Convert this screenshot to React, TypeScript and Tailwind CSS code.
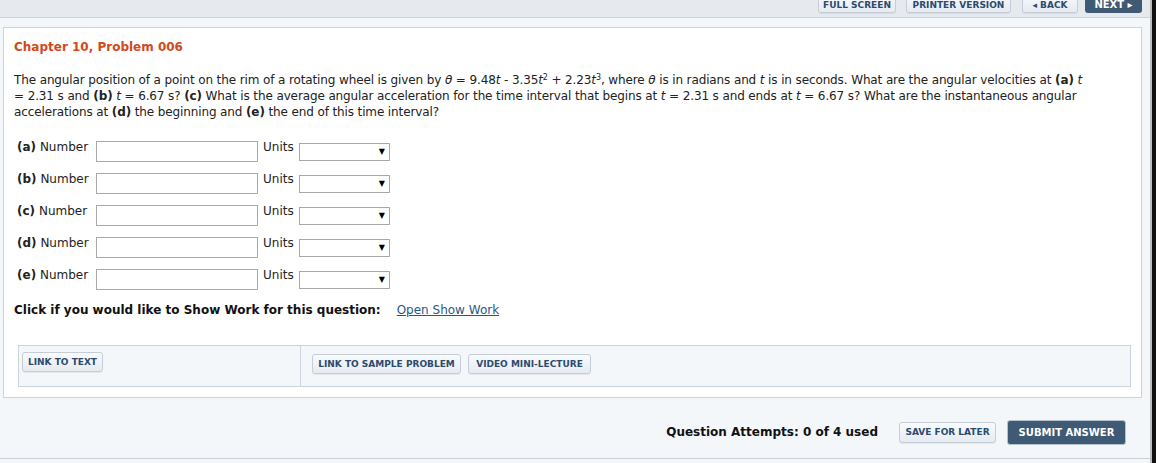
import React from "react";

const btn =
  "flex items-center justify-center whitespace-nowrap rounded-[3px] border border-[#c5cdd8] bg-gradient-to-b from-[#f9fbfd] to-[#e6ebf1] text-[9px] font-bold text-[#2c4a6e] uppercase leading-none shadow-[0_1px_0_rgba(0,0,0,0.06)]";

function Row({ l }: { l: string }) {
  return (
    <div className="flex items-start h-[32px] pl-[3px]">
      <div className="w-[79px] leading-[16px] whitespace-nowrap">
        <b>({l})</b> Number
      </div>
      <div className="mt-[2px] w-[162px] h-[21px] border border-[#a9a9a9] bg-white" />
      <div className="ml-[5px] w-[36px] leading-[16px]">Units</div>
      <div className="mt-[4px] w-[91px] h-[18px] border border-[#a9a9a9] bg-white flex items-center justify-end pr-[4px] text-[8px] text-black">
        ▼
      </div>
    </div>
  );
}

export default function App() {
  return (
    <div
      className="w-[1156px] h-[463px] flex bg-[#f4f7fa] overflow-hidden text-[12px] text-[#222]"
      style={{ fontFamily: '"DejaVu Sans", Verdana, sans-serif' }}
    >
      <div className="w-[1150px] flex flex-col">
        <div className="h-[18px] bg-[#e6eaee] border-b border-[#c9d1da] flex justify-end items-end pr-[8px]">
          <div className="flex items-end mb-[4px]">
            <div className={btn + " w-[78px] h-[22px] pt-[6px]"}>Full Screen</div>
            <div className={btn + " ml-[10px] w-[105px] h-[22px] pt-[6px]"}>Printer Version</div>
            <div className={btn + " ml-[11px] w-[56px] h-[22px] pt-[6px]"}>◂ Back</div>
            <div className="ml-[7px] w-[57px] h-[22px] pt-[6px] flex items-center justify-center rounded-[3px] bg-[#3e5a75] text-white text-[10px] font-bold leading-none">
              NEXT ▸
            </div>
          </div>
        </div>
        <div className="pl-[3px] pr-[8px] pt-[9px]">
          <div className="bg-white border border-[#cdd4de] px-[10px] pt-[11px] pb-[10px]">
            <div className="font-bold text-[#d2491b] leading-[16px] text-[12px]">Chapter 10, Problem 006</div>
            <div className="mt-[17px] leading-[16px] whitespace-nowrap tracking-[-0.12px]">
              The angular position of a point on the rim of a rotating wheel is given by <i>θ</i> = 9.48<i>t</i> - 3.35<i>t</i>
              <sup className="text-[8px]">2</sup> + 2.23<i>t</i>
              <sup className="text-[8px]">3</sup>, where <i>θ</i> is in radians and <i>t</i> is in seconds. What are the angular velocities at <b>(a)</b> <i>t</i>
              <br />= 2.31 s and <b>(b)</b> <i>t</i> = 6.67 s? <b>(c)</b> What is the average angular acceleration for the time interval that begins at <i>t</i> = 2.31 s and ends at <i>t</i> = 6.67 s? What are the instantaneous angular
              <br />
              accelerations at <b>(d)</b> the beginning and <b>(e)</b> the end of this time interval?
            </div>
            <div className="mt-[19px]">
              <Row l="a" />
              <Row l="b" />
              <Row l="c" />
              <Row l="d" />
              <Row l="e" />
            </div>
            <div className="mt-[3px] leading-[16px] flex">
              <span className="font-bold text-[#111]">Click if you would like to Show Work for this question:</span>
              <span className="ml-[16px] underline text-[#2a5886]">Open Show Work</span>
            </div>
            <div className="mt-[27px] ml-[4px] w-[1113px] h-[42px] border border-[#cdd4de] bg-[#f4f7fa] flex">
              <div className="w-[282px] border-r border-[#cdd4de] pl-[3px] pt-[6px]">
                <div className={btn + " w-[81px] h-[20px]"}>Link to Text</div>
              </div>
              <div className="flex-1 pl-[11px] pt-[8px] flex items-start">
                <div className={btn + " w-[149px] h-[20px]"}>Link to Sample Problem</div>
                <div className={btn + " ml-[7px] w-[123px] h-[20px]"}>Video Mini-Lecture</div>
              </div>
            </div>
          </div>
        </div>
        <div className="h-[61px] flex items-start justify-end pr-[24px] pt-[22px] border-b border-[#c9d1da]">
          <div className="font-bold text-[#111] leading-[16px] mt-[4px]">Question Attempts: 0 of 4 used</div>
          <div className={btn + " ml-[21px] mt-[2px] w-[97px] h-[21px]"}>Save for Later</div>
          <div className="ml-[11px] w-[119px] h-[25px] flex items-center justify-center rounded-[3px] bg-[#3e5a75] border border-[#b7c2cf] text-white text-[10px] font-bold leading-none">
            SUBMIT ANSWER
          </div>
        </div>
      </div>
      <div className="w-[2px] bg-[#bdbdbd]" />
      <div className="w-[4px] bg-[#111]" />
    </div>
  );
}
